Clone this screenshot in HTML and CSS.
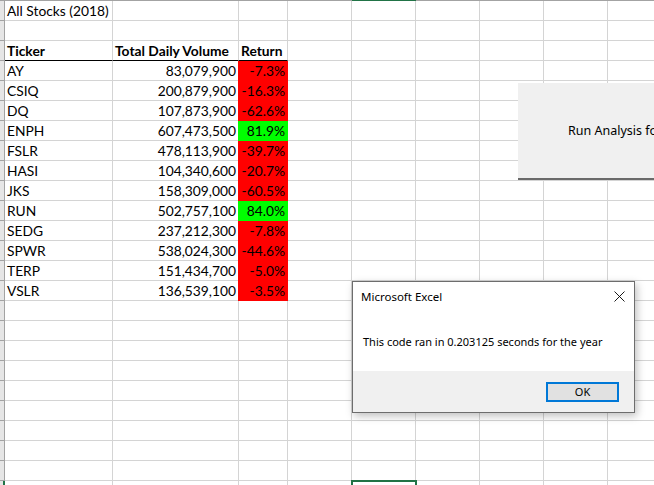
FILE: index.html
```html
<!DOCTYPE html>
<html>
<head>
<meta charset="utf-8">
<link rel="stylesheet" href="styles.css">
</head>
<body>
<div class="sheet">
  <div class="row colhead"><i></i><i></i><i></i><i></i><i></i><i class="sel"></i><i></i><i></i><i></i><i></i></div>
  <div class="row"><b class="rh"></b><b class="c">All Stocks (2018)</b><b class="c"></b><b class="c"></b><b class="c"></b><b class="c"></b><b class="c"></b><b class="c"></b><b class="c"></b><b class="c"></b></div>
  <div class="row"><b class="rh"></b><b class="c"></b><b class="c"></b><b class="c"></b><b class="c"></b><b class="c"></b><b class="c"></b><b class="c"></b><b class="c"></b><b class="c"></b></div>
  <div class="row"><b class="rh"></b><b class="c hd">Ticker</b><b class="c hd">Total Daily Volume</b><b class="c hd">Return</b><b class="c"></b><b class="c"></b><b class="c"></b><b class="c"></b><b class="c"></b><b class="c"></b></div>
  <div class="row"><b class="rh"></b><b class="c">AY</b><b class="c num">83,079,900</b><b class="c num red">-7.3%</b><b class="c"></b><b class="c"></b><b class="c"></b><b class="c"></b><b class="c"></b><b class="c"></b></div>
  <div class="row"><b class="rh"></b><b class="c">CSIQ</b><b class="c num">200,879,900</b><b class="c num red">-16.3%</b><b class="c"></b><b class="c"></b><b class="c"></b><b class="c"></b><b class="c"></b><b class="c"></b></div>
  <div class="row"><b class="rh"></b><b class="c">DQ</b><b class="c num">107,873,900</b><b class="c num red">-62.6%</b><b class="c"></b><b class="c"></b><b class="c"></b><b class="c"></b><b class="c"></b><b class="c"></b></div>
  <div class="row"><b class="rh"></b><b class="c">ENPH</b><b class="c num">607,473,500</b><b class="c num green">81.9%</b><b class="c"></b><b class="c"></b><b class="c"></b><b class="c"></b><b class="c"></b><b class="c"></b></div>
  <div class="row"><b class="rh"></b><b class="c">FSLR</b><b class="c num">478,113,900</b><b class="c num red">-39.7%</b><b class="c"></b><b class="c"></b><b class="c"></b><b class="c"></b><b class="c"></b><b class="c"></b></div>
  <div class="row"><b class="rh"></b><b class="c">HASI</b><b class="c num">104,340,600</b><b class="c num red">-20.7%</b><b class="c"></b><b class="c"></b><b class="c"></b><b class="c"></b><b class="c"></b><b class="c"></b></div>
  <div class="row"><b class="rh"></b><b class="c">JKS</b><b class="c num">158,309,000</b><b class="c num red">-60.5%</b><b class="c"></b><b class="c"></b><b class="c"></b><b class="c"></b><b class="c"></b><b class="c"></b></div>
  <div class="row"><b class="rh"></b><b class="c">RUN</b><b class="c num">502,757,100</b><b class="c num green">84.0%</b><b class="c"></b><b class="c"></b><b class="c"></b><b class="c"></b><b class="c"></b><b class="c"></b></div>
  <div class="row"><b class="rh"></b><b class="c">SEDG</b><b class="c num">237,212,300</b><b class="c num red">-7.8%</b><b class="c"></b><b class="c"></b><b class="c"></b><b class="c"></b><b class="c"></b><b class="c"></b></div>
  <div class="row"><b class="rh"></b><b class="c">SPWR</b><b class="c num">538,024,300</b><b class="c num red">-44.6%</b><b class="c"></b><b class="c"></b><b class="c"></b><b class="c"></b><b class="c"></b><b class="c"></b></div>
  <div class="row"><b class="rh"></b><b class="c">TERP</b><b class="c num">151,434,700</b><b class="c num red">-5.0%</b><b class="c"></b><b class="c"></b><b class="c"></b><b class="c"></b><b class="c"></b><b class="c"></b></div>
  <div class="row"><b class="rh"></b><b class="c">VSLR</b><b class="c num">136,539,100</b><b class="c num red">-3.5%</b><b class="c"></b><b class="c"></b><b class="c"></b><b class="c"></b><b class="c"></b><b class="c"></b></div>
  <div class="row"><b class="rh"></b><b class="c"></b><b class="c"></b><b class="c"></b><b class="c"></b><b class="c"></b><b class="c"></b><b class="c"></b><b class="c"></b><b class="c"></b></div>
  <div class="row"><b class="rh"></b><b class="c"></b><b class="c"></b><b class="c"></b><b class="c"></b><b class="c"></b><b class="c"></b><b class="c"></b><b class="c"></b><b class="c"></b></div>
  <div class="row"><b class="rh"></b><b class="c"></b><b class="c"></b><b class="c"></b><b class="c"></b><b class="c"></b><b class="c"></b><b class="c"></b><b class="c"></b><b class="c"></b></div>
  <div class="row"><b class="rh"></b><b class="c"></b><b class="c"></b><b class="c"></b><b class="c"></b><b class="c"></b><b class="c"></b><b class="c"></b><b class="c"></b><b class="c"></b></div>
  <div class="row"><b class="rh"></b><b class="c"></b><b class="c"></b><b class="c"></b><b class="c"></b><b class="c"></b><b class="c"></b><b class="c"></b><b class="c"></b><b class="c"></b></div>
  <div class="row"><b class="rh"></b><b class="c"></b><b class="c"></b><b class="c"></b><b class="c"></b><b class="c"></b><b class="c"></b><b class="c"></b><b class="c"></b><b class="c"></b></div>
  <div class="row"><b class="rh"></b><b class="c"></b><b class="c"></b><b class="c"></b><b class="c"></b><b class="c"></b><b class="c"></b><b class="c"></b><b class="c"></b><b class="c"></b></div>
  <div class="row"><b class="rh"></b><b class="c"></b><b class="c"></b><b class="c"></b><b class="c"></b><b class="c"></b><b class="c"></b><b class="c"></b><b class="c"></b><b class="c"></b></div>
  <div class="row"><b class="rh"></b><b class="c"></b><b class="c"></b><b class="c"></b><b class="c"></b><b class="c"></b><b class="c"></b><b class="c"></b><b class="c"></b><b class="c"></b></div>
  <div class="row"><b class="rh rsel"></b><b class="c"></b><b class="c"></b><b class="c"></b><b class="c"></b><b class="c csel"></b><b class="c"></b><b class="c"></b><b class="c"></b><b class="c"></b></div>
</div>

<div class="runbtn"><span>Run Analysis for All Stocks</span></div>

<div class="dialog">
  <div class="dlg-top">
    <div class="dlg-title">
      <span>Microsoft Excel</span>
      <svg class="close" width="11" height="11" viewBox="0 0 11 11"><path d="M0.5 0.5 L10.5 10.5 M10.5 0.5 L0.5 10.5" stroke="#000" stroke-width="0.9" fill="none"/></svg>
    </div>
    <div class="dlg-msg">This code ran in 0.203125 seconds for the year</div>
  </div>
  <div class="dlg-bottom">
    <div class="okbtn">OK</div>
  </div>
</div>
</body>
</html>
```

FILE: styles.css
```css
html, body {
  margin: 0;
  padding: 0;
  width: 654px;
  height: 485px;
  overflow: hidden;
  background: #fff;
}
body {
  position: relative;
  font-family: "Lato", "Liberation Sans", sans-serif;
}
.sheet {
  display: flex;
  flex-direction: column;
  width: 672px;
}
.row {
  display: grid;
  grid-template-columns: 5px 108px 126px 49px repeat(6, 64px);
  height: 20px;
}
.colhead {
  height: 1px;
}
.colhead i {
  display: block;
  background: #a3a3a3;
}
.colhead i.sel {
  background: #217346;
}
.row b {
  display: flex;
  align-items: flex-end;
  box-sizing: border-box;
  font-weight: normal;
  white-space: nowrap;
  overflow: visible;
}
.rh {
  background: #e6e6e6;
  border-right: 1px solid #a3a3a3;
  border-bottom: 1px solid #a3a3a3;
}
.rsel {
  border-right-color: #217346;
  border-right-width: 2px;
}
.c {
  border-right: 1px solid #d4d4d4;
  border-bottom: 1px solid #d4d4d4;
  padding: 0 2px 1px 2px;
  font-size: 13.8px;
  line-height: 16px;
  color: #000;
}
.row b.hd {
  font-weight: bold;
  border-bottom-color: #000;
}
.num {
  justify-content: flex-end;
}
.red {
  background: #ff0000;
  border-right-color: #ff0000;
  border-bottom-color: #ff0000;
  box-shadow: -1px 0 0 #ff0000;
}
.green {
  background: #00ff00;
  border-right-color: #00ff00;
  border-bottom-color: #00ff00;
  box-shadow: -1px 0 0 #00ff00;
}
.csel {
  outline: 2px solid #217346;
  outline-offset: -1px;
}
.runbtn {
  position: absolute;
  left: 518px;
  top: 83px;
  width: 86px;
  height: 95px;
  background: #f0f0f0;
  border-bottom: 2px solid #6a6a6a;
  display: flex;
  align-items: center;
  padding-left: 50px;
  overflow: hidden;
  font-family: "Noto Sans", "Open Sans", sans-serif;
  font-size: 12.5px;
  color: #000;
  white-space: nowrap;
}
.dialog {
  position: absolute;
  left: 352px;
  top: 281px;
  width: 281px;
  height: 130px;
  border: 1px solid #6d6d6d;
  background: #fff;
  box-shadow: 2px 3px 8px rgba(0, 0, 0, 0.25);
  display: flex;
  flex-direction: column;
  font-family: "Noto Sans", "Open Sans", sans-serif;
  font-size: 11px;
  color: #000;
}
.dlg-top {
  flex: 1;
  display: flex;
  flex-direction: column;
}
.dlg-title {
  display: flex;
  justify-content: space-between;
  align-items: center;
  height: 28px;
  padding: 0 9px 0 8px;
  font-size: 11.5px;
}
.dlg-msg {
  padding: 24px 0 0 10px;
}
.dlg-bottom {
  height: 41px;
  background: #f0f0f0;
  display: flex;
  justify-content: flex-end;
  align-items: center;
  padding-right: 15px;
}
.okbtn {
  width: 69px;
  height: 16px;
  border: 2px solid #0078d7;
  background: #e1e1e1;
  display: flex;
  align-items: center;
  justify-content: center;
  font-size: 11px;
}
```
